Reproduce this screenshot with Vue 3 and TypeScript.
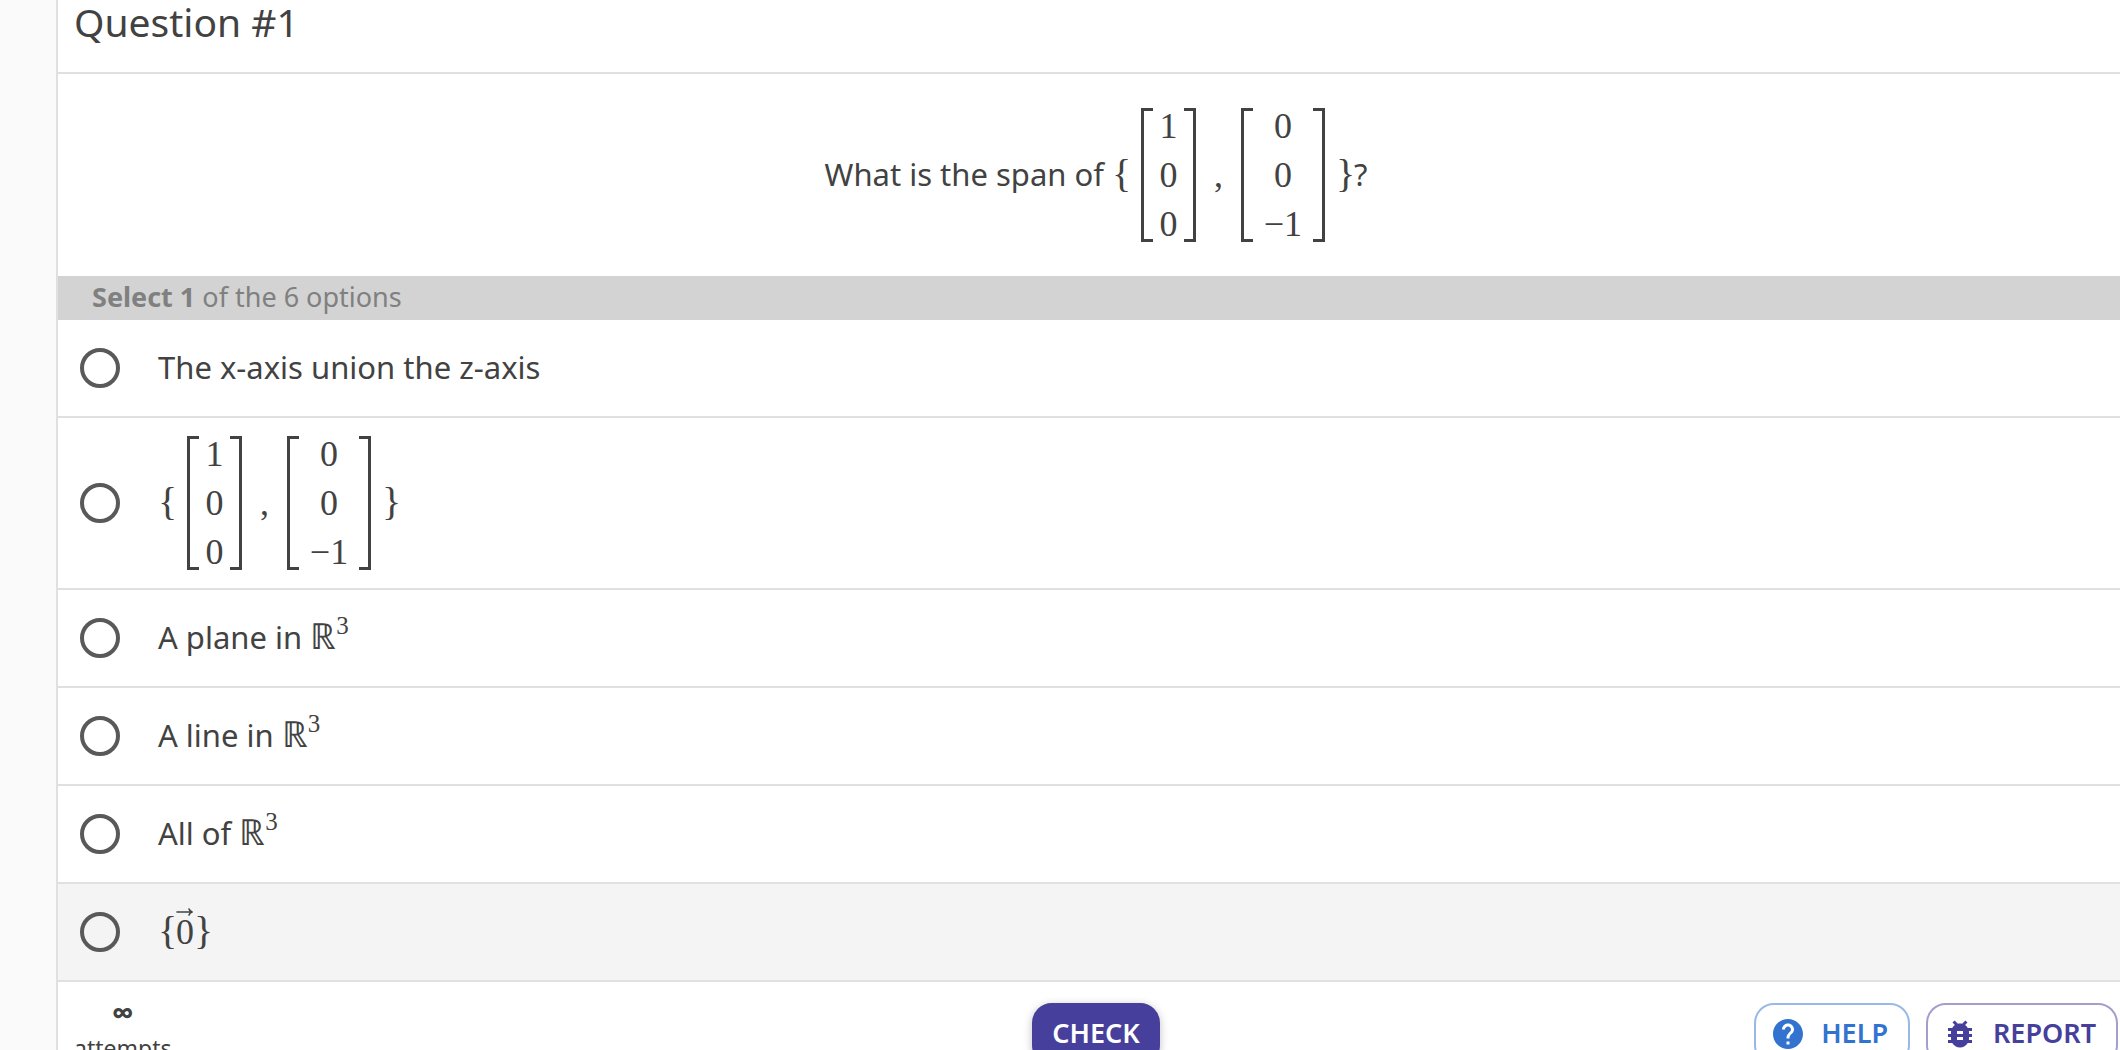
<script setup lang="ts">
import { ref } from 'vue'

interface Option {
  id: string
  kind: 'text' | 'space' | 'set' | 'zero'
  text?: string
}

const vectors: string[][] = [
  ['1', '0', '0'],
  ['0', '0', '−1'],
]

const options: Option[] = [
  { id: 'axes', kind: 'text', text: 'The x-axis union the z-axis' },
  { id: 'set', kind: 'set' },
  { id: 'plane', kind: 'space', text: 'A plane in' },
  { id: 'line', kind: 'space', text: 'A line in' },
  { id: 'all', kind: 'space', text: 'All of' },
  { id: 'zero', kind: 'zero' },
]

const selected = ref('')
</script>

<template>
  <div class="page">
    <main class="card">
      <header class="header">
        <h1>Question #1</h1>
      </header>

      <section class="prompt">
        <span class="label">What is the span of</span>
        <span class="math set">
          <span class="brace">{</span>
          <template v-for="(vector, i) in vectors" :key="i">
            <span v-if="i > 0" class="comma">,</span>
            <span class="matrix" :class="{ wide: i > 0 }">
              <span v-for="(entry, row) in vector" :key="row">{{ entry }}</span>
            </span>
          </template>
          <span class="brace">}</span>
        </span>
        <span class="label">?</span>
      </section>

      <p class="hint"><span class="label"><b>Select 1</b> of the 6 options</span></p>

      <div class="options" role="radiogroup" aria-label="Answers">
        <label
          v-for="option in options"
          :key="option.id"
          class="option"
          :class="{ active: option.id === 'zero' }"
        >
          <input v-model="selected" type="radio" name="answer" :value="option.id" />
          <span v-if="option.kind === 'set'" class="math set">
            <span class="brace">{</span>
            <template v-for="(vector, i) in vectors" :key="i">
              <span v-if="i > 0" class="comma">,</span>
              <span class="matrix" :class="{ wide: i > 0 }">
                <span v-for="(entry, row) in vector" :key="row">{{ entry }}</span>
              </span>
            </template>
            <span class="brace">}</span>
          </span>
          <span v-else-if="option.kind === 'zero'" class="math zero">
            <span class="brace">{</span>
            <span class="vector">0
              <svg viewBox="0 0 18 8" aria-hidden="true">
                <path d="M1 4H16M13 1C13.5 2.6 14.7 3.6 16.5 4C14.7 4.4 13.5 5.4 13 7" fill="none" stroke="currentColor" stroke-width="1.6" stroke-linecap="round" />
              </svg>
            </span>
            <span class="brace">}</span>
          </span>
          <span v-else class="label">
            {{ option.text }}
            <span v-if="option.kind === 'space'" class="math">ℝ<sup>3</sup></span>
          </span>
        </label>
      </div>

      <footer class="footer">
        <div class="attempts"><b>∞</b><span>attempts</span></div>
        <button type="button" class="button check"><span class="label">CHECK</span></button>
        <div class="actions">
          <button type="button" class="button help">
            <svg viewBox="0 0 24 24" aria-hidden="true">
              <path d="M12 2C6.48 2 2 6.48 2 12s4.48 10 10 10 10-4.48 10-10S17.52 2 12 2zm1 17h-2v-2h2v2zm2.07-7.75l-.9.92C13.45 12.9 13 13.5 13 15h-2v-.5c0-1.1.45-2.1 1.17-2.83l1.24-1.26c.37-.36.59-.86.59-1.41 0-1.1-.9-2-2-2s-2 .9-2 2H8c0-2.21 1.79-4 4-4s4 1.79 4 4c0 .88-.36 1.68-.93 2.25z" />
            </svg>
            <span class="label">HELP</span>
          </button>
          <button type="button" class="button report">
            <svg viewBox="0 0 24 24" aria-hidden="true">
              <path d="M20 8h-2.81c-.45-.78-1.07-1.45-1.82-1.96L17 4.41 15.59 3l-2.17 2.17C12.96 5.06 12.49 5 12 5c-.49 0-.96.06-1.41.17L8.41 3 7 4.41l1.62 1.63C7.88 6.55 7.26 7.22 6.81 8H4v2h2.09c-.05.33-.09.66-.09 1v1H4v2h2v1c0 .34.04.67.09 1H4v2h2.81c1.04 1.79 2.97 3 5.19 3s4.15-1.21 5.19-3H20v-2h-2.09c.05-.33.09-.66.09-1v-1h2v-2h-2v-1c0-.34-.04-.67-.09-1H20V8zm-6 8h-4v-2h4v2zm0-4h-4v-2h4v2z" />
            </svg>
            <span class="label">REPORT</span>
          </button>
        </div>
      </footer>
    </main>
  </div>
</template>

<style>
body {
  margin: 0;
  background: #fafafa;
}
</style>

<style scoped>
.page {
  box-sizing: border-box;
  height: 100vh;
  overflow: hidden;
  padding-left: 56px;
  background: #fafafa;
  color: #424242;
  font-family: "Noto Sans", "Open Sans", sans-serif;
  font-size: 31px;
  line-height: 36px;
}
.card {
  min-height: 100%;
  border-left: 2px solid #e0e0e0;
  background: #fff;
}
.header {
  padding: 0 16px 28px;
  border-bottom: 2px solid #e0e0e0;
}
h1 {
  margin: 0;
  font-size: 39px;
  font-weight: 400;
  line-height: 44px;
}
.label {
  padding-bottom: 2px;
  white-space: nowrap;
}
.prompt {
  display: flex;
  align-items: center;
  justify-content: center;
  padding: 34px 2px 34px 16px;
}
.prompt .set {
  margin-left: 8px;
}
.math {
  font-family: "Liberation Serif", serif;
  font-size: 36px;
}
.set,
.zero {
  display: flex;
  align-items: center;
}
.brace {
  width: 18px;
  padding-bottom: 2px;
  font-size: 40px;
  text-align: center;
}
.matrix {
  position: relative;
  display: grid;
  row-gap: 13px;
  box-sizing: border-box;
  width: 55px;
  margin: 0 11px;
  border: solid currentColor;
  border-width: 0 3px;
  text-align: center;
}
.matrix.wide {
  width: 84px;
}
.matrix::before,
.matrix::after {
  content: "";
  position: absolute;
  top: 0;
  bottom: 0;
  width: 9px;
  border: solid currentColor;
  border-width: 3px 0;
}
.matrix::before {
  left: 0;
}
.matrix::after {
  right: 0;
}
.comma {
  margin: 0 7px;
}
sup {
  font-size: 25px;
  line-height: 0;
  vertical-align: 15px;
}
.vector {
  position: relative;
  width: 18px;
}
.vector svg {
  position: absolute;
  top: -6px;
  left: 0;
  width: 18px;
  height: 8px;
}
.hint {
  display: flex;
  align-items: center;
  height: 44px;
  margin: 0;
  padding: 0 34px;
  background: #d3d3d3;
  color: #808080;
  font-size: 27px;
}
.option {
  display: flex;
  align-items: center;
  gap: 38px;
  box-sizing: border-box;
  min-height: 98px;
  padding: 18px 22px;
  border-bottom: 2px solid #e0e0e0;
}
.option.active {
  background: #f4f4f4;
}
input {
  flex: none;
  appearance: none;
  box-sizing: border-box;
  width: 40px;
  height: 40px;
  margin: 0;
  border: 4px solid #595959;
  border-radius: 50%;
}
input:checked {
  background: radial-gradient(#595959 0 10px, transparent 11px);
}
.footer {
  display: grid;
  grid-template-columns: 1fr auto 1fr;
  align-items: start;
  padding: 12px 2px 12px 16px;
}
.attempts {
  display: flex;
  flex-direction: column;
  align-items: center;
  justify-self: start;
  font-size: 23px;
}
.attempts b {
  font-size: 31px;
}
.button {
  display: flex;
  align-items: center;
  gap: 15px;
  box-sizing: border-box;
  height: 62px;
  margin-top: 9px;
  padding: 0 20px 0 14px;
  border: 2px solid;
  border-radius: 20px;
  background: #fff;
  font-family: inherit;
  font-size: 27px;
  font-weight: 600;
  line-height: 36px;
}
.button svg {
  width: 36px;
  height: 36px;
  fill: currentColor;
}
.check {
  padding: 0 18px;
  border-color: #463f9b;
  background: #463f9b;
  box-shadow: 0 2px 8px rgba(0, 0, 0, 0.25);
  color: #fff;
}
.actions {
  display: flex;
  justify-content: flex-end;
  gap: 16px;
}
.help {
  border-color: #98b9e7;
  color: #3273cf;
}
.report {
  border-color: #a29fcd;
  color: #463f9b;
}
</style>
